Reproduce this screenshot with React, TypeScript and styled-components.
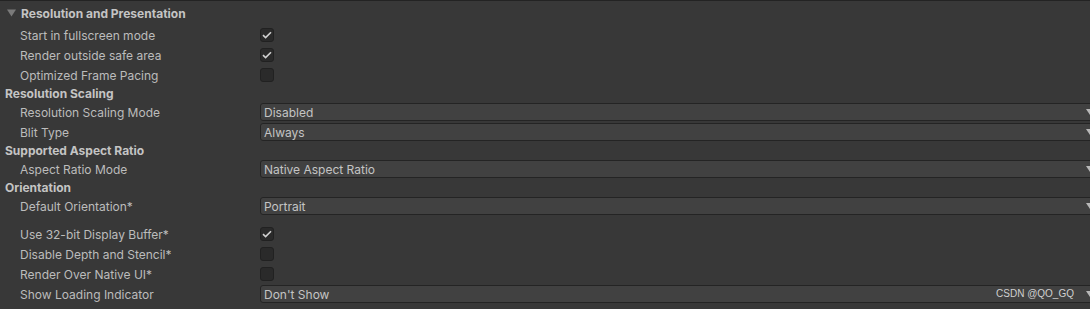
import styled, { createGlobalStyle } from 'styled-components'

const GlobalStyle = createGlobalStyle`
  html, body {
    margin: 0;
    padding: 0;
    background: #383838;
    overflow: hidden;
  }
`

type Field =
  | { kind: 'header'; label: string }
  | { kind: 'check'; label: string; checked: boolean }
  | { kind: 'select'; label: string; value: string }
  | { kind: 'space' }

const fields: Field[] = [
  { kind: 'check', label: 'Start in fullscreen mode', checked: true },
  { kind: 'check', label: 'Render outside safe area', checked: true },
  { kind: 'check', label: 'Optimized Frame Pacing', checked: false },
  { kind: 'header', label: 'Resolution Scaling' },
  { kind: 'select', label: 'Resolution Scaling Mode', value: 'Disabled' },
  { kind: 'select', label: 'Blit Type', value: 'Always' },
  { kind: 'header', label: 'Supported Aspect Ratio' },
  { kind: 'select', label: 'Aspect Ratio Mode', value: 'Native Aspect Ratio' },
  { kind: 'header', label: 'Orientation' },
  { kind: 'select', label: 'Default Orientation*', value: 'Portrait' },
  { kind: 'space' },
  { kind: 'check', label: 'Use 32-bit Display Buffer*', checked: true },
  { kind: 'check', label: 'Disable Depth and Stencil*', checked: false },
  { kind: 'check', label: 'Render Over Native UI*', checked: false },
  { kind: 'select', label: 'Show Loading Indicator', value: "Don't Show" },
]

export default function App() {
  return (
    <>
      <GlobalStyle />
      <Panel>
        <Foldout>
          <Arrow viewBox="0 0 9 8">
            <path d="M0 0.5 H9 L4.5 7.5 Z" fill="#7a7a7a" />
          </Arrow>
          <FoldoutTitle>Resolution and Presentation</FoldoutTitle>
        </Foldout>
        {fields.map((f, i) => {
          if (f.kind === 'header') return <SectionHeader key={i}>{f.label}</SectionHeader>
          if (f.kind === 'space') return <Spacer key={i} />
          return (
            <Row key={i}>
              <Label>{f.label}</Label>
              {f.kind === 'check' ? (
                <CheckBox>
                  {f.checked && (
                    <svg width="10" height="8" viewBox="0 0 10 8">
                      <path d="M1 4.2 L3.6 6.6 L9 1.2" stroke="#d0d0d0" strokeWidth="1.6" fill="none" />
                    </svg>
                  )}
                </CheckBox>
              ) : (
                <Select>
                  <span>{f.value}</span>
                  <DropArrow viewBox="0 0 8 6">
                    <path d="M0 0 H8 L4 6 Z" fill="#b8b8b8" />
                  </DropArrow>
                </Select>
              )}
            </Row>
          )
        })}
        <Watermark>CSDN @QO_GQ</Watermark>
      </Panel>
    </>
  )
}

const Panel = styled.div`
  position: relative;
  width: 1101px;
  height: 309px;
  border-top: 1px solid #232323;
  box-sizing: border-box;
  font-family: Inter, 'Liberation Sans', sans-serif;
  font-size: 12px;
  color: #bcbcbc;
`

const Foldout = styled.div`
  height: 24px;
  display: flex;
  align-items: center;
  padding-left: 7px;
`

const Arrow = styled.svg`
  width: 9px;
  height: 8px;
  margin-right: 5px;
`

const FoldoutTitle = styled.span`
  font-weight: 700;
  color: #c4c4c4;
`

const SectionHeader = styled.div`
  height: 17px;
  line-height: 17px;
  padding-left: 5px;
  font-weight: 700;
  color: #c4c4c4;
`

const Spacer = styled.div`
  height: 8px;
`

const Row = styled.div`
  height: 20px;
  display: grid;
  grid-template-columns: 260px 1fr;
  align-items: center;
`

const Label = styled.span`
  padding-left: 20px;
  white-space: nowrap;
`

const CheckBox = styled.div`
  width: 14px;
  height: 14px;
  box-sizing: border-box;
  border: 1px solid #212121;
  border-radius: 3px;
  background: #2a2a2a;
  display: flex;
  align-items: center;
  justify-content: center;
`

const Select = styled.div`
  height: 18px;
  box-sizing: border-box;
  border: 1px solid #242424;
  border-radius: 3px;
  background: #414141;
  display: flex;
  align-items: center;
  justify-content: space-between;
  padding: 0 6px 0 3px;
  color: #c4c4c4;
`

const DropArrow = styled.svg`
  width: 8px;
  height: 6px;
`

const Watermark = styled.div`
  position: absolute;
  right: 27px;
  top: 287px;
  font-family: 'Liberation Sans', Arial, sans-serif;
  font-size: 10px;
  color: #d0d0d0;
`
